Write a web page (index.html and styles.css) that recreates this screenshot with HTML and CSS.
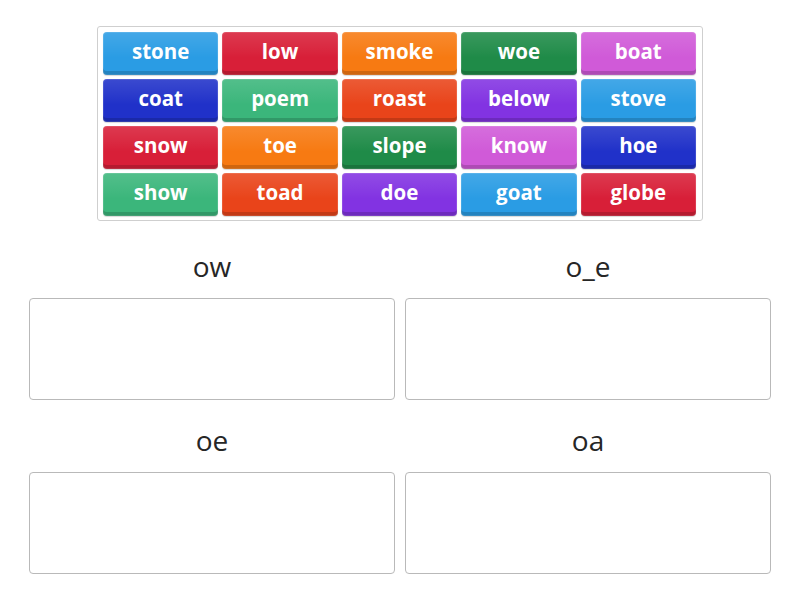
FILE: index.html
```html
<!DOCTYPE html>
<html>
<head>
<meta charset="utf-8">
<link rel="stylesheet" href="styles.css">
</head>
<body>
<div class="page">
  <div class="bank">
    <div class="tile c1">stone</div>
    <div class="tile c2">low</div>
    <div class="tile c3">smoke</div>
    <div class="tile c4">woe</div>
    <div class="tile c5">boat</div>
    <div class="tile c6">coat</div>
    <div class="tile c7">poem</div>
    <div class="tile c8">roast</div>
    <div class="tile c9">below</div>
    <div class="tile c1">stove</div>
    <div class="tile c2">snow</div>
    <div class="tile c3">toe</div>
    <div class="tile c4">slope</div>
    <div class="tile c5">know</div>
    <div class="tile c6">hoe</div>
    <div class="tile c7">show</div>
    <div class="tile c8">toad</div>
    <div class="tile c9">doe</div>
    <div class="tile c1">goat</div>
    <div class="tile c2">globe</div>
  </div>
  <div class="groups">
    <div class="group"><div class="label">ow</div><div class="box"></div></div>
    <div class="group"><div class="label">o_e</div><div class="box"></div></div>
    <div class="group"><div class="label">oe</div><div class="box"></div></div>
    <div class="group"><div class="label">oa</div><div class="box"></div></div>
  </div>
</div>
</body>
</html>
```

FILE: styles.css
```css
html, body {
  margin: 0;
  padding: 0;
  background: #ffffff;
}
body {
  font-family: "Open Sans", "Liberation Sans", sans-serif;
  width: 800px;
  height: 600px;
  overflow: hidden;
}
.page {
  display: flex;
  flex-direction: column;
  align-items: center;
  padding-top: 26px;
}
.bank {
  box-sizing: border-box;
  width: 606px;
  border: 1px solid #cfcfcf;
  border-radius: 3px;
  padding: 5px 6px 4px 5px;
  display: grid;
  grid-template-columns: repeat(5, 1fr);
  grid-auto-rows: 43px;
  gap: 4px;
}
.tile {
  border-radius: 4px;
  color: #ffffff;
  font-weight: 700;
  font-size: 20.5px;
  display: flex;
  align-items: center;
  justify-content: center;
  padding-bottom: 6px;
  box-sizing: border-box;
  box-shadow: inset 0 -4px 0 rgba(0,0,0,0.16), inset 0 0 0 1px rgba(255,255,255,0.12), 0 1px 1px rgba(0,0,0,0.15);
  background-image: linear-gradient(to bottom, rgba(255,255,255,0.12), rgba(255,255,255,0) 60%);
}
.c1 { background-color: #2a9ce4; }
.c2 { background-color: #d81f38; }
.c3 { background-color: #f77a12; }
.c4 { background-color: #1f8b48; }
.c5 { background-color: #d05ad8; }
.c6 { background-color: #2031c9; }
.c7 { background-color: #3bb67b; }
.c8 { background-color: #e9441a; }
.c9 { background-color: #8233e2; }
.groups {
  margin-top: 29px;
  width: 742px;
  display: grid;
  grid-template-columns: 1fr 1fr;
  column-gap: 10px;
  row-gap: 24px;
}
.group {
  display: flex;
  flex-direction: column;
}
.label {
  height: 36px;
  line-height: 32px;
  text-align: center;
  font-size: 28px;
  color: #262626;
  margin-bottom: 12px;
}
.box {
  box-sizing: border-box;
  height: 102px;
  border: 1px solid #b9b9b9;
  border-radius: 4px;
}
```
